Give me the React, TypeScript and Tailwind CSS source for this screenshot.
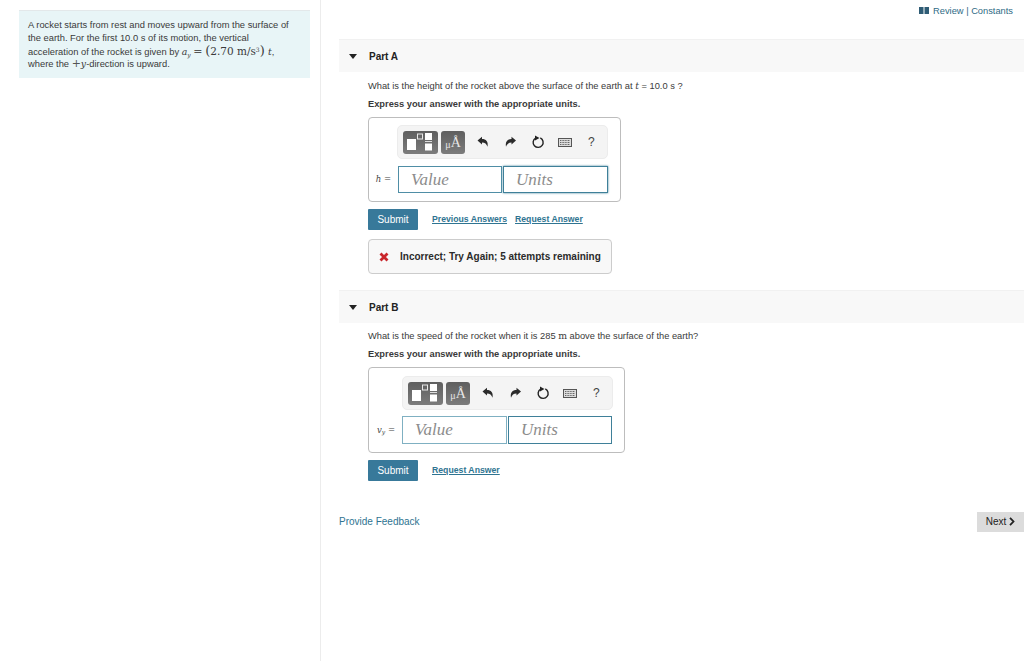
import React from "react";

const sans = "font-['Liberation_Sans',Arial,sans-serif]";
const serif = "font-['Liberation_Serif','Times_New_Roman',serif]";
const math = "font-['DejaVu_Serif',serif]";

function Toolbar({ ml, mt }: { ml: string; mt: string }) {
  return (
    <div className={`${ml} ${mt} flex h-[34px] w-[211px] items-center rounded-[5px] border border-[#ececec] bg-[#f4f4f4] pl-[5px]`}>
      <div className="flex h-[23px] w-[35px] items-center justify-center rounded-[3px] bg-linear-to-b from-[#5f5f5f] to-[#7c7c7c]">
        <svg width="29" height="20" viewBox="0 0 29 20">
          <rect x="1" y="7" width="9" height="11" fill="#fff" />
          <rect x="11.5" y="2" width="5" height="5" fill="none" stroke="#e8e8e8" strokeWidth="1" />
          <rect x="19" y="1" width="7" height="7" fill="#fff" />
          <rect x="19" y="9" width="7" height="1" fill="#ddd" />
          <rect x="19" y="11.5" width="7" height="7" fill="#fff" />
        </svg>
      </div>
      <div className={`ml-[3px] flex h-[23px] w-[24px] items-end justify-center rounded-[3px] bg-linear-to-b from-[#5f5f5f] to-[#7c7c7c] pb-[4px] leading-none text-[#e6e6e6] ${serif}`}>
        <span className="text-[10px] leading-none">μ</span>
        <span className="text-[14px] leading-none">Å</span>
      </div>
      <svg className="ml-[12px]" width="12" height="12" viewBox="0 0 12 12">
        <path d="M0.5 4.5 L5 0.8 V3 C9 3 11.5 5.5 10.5 10.8 C9.5 8 8 6.5 5 6.5 V8.5 Z" fill="#2b2b2b" />
      </svg>
      <svg className="ml-[16px]" width="12" height="12" viewBox="0 0 12 12">
        <path d="M11 4.5 L6.5 0.8 V3 C2.5 3 0 5.5 1 10.8 C2 8 3.5 6.5 6.5 6.5 V8.5 Z" fill="#2b2b2b" />
      </svg>
      <svg className="ml-[15px]" width="13" height="14" viewBox="0 0 13 14">
        <path d="M8.3 2.9 A5 5 0 1 1 3.6 3.1" fill="none" stroke="#222" strokeWidth="1.4" />
        <path d="M3 0.5 L7.5 3 L3 5.5 Z" fill="#222" />
      </svg>
      <svg className="ml-[13px]" width="14" height="9" viewBox="0 0 14 9">
        <rect x="0.5" y="0.5" width="13" height="8" fill="#ddd" stroke="#555" />
        <path d="M2 2.5 H12 M2 4.5 H12 M2 6.5 H12" stroke="#666" strokeWidth="1" strokeDasharray="1 0.6" />
      </svg>
      <span className={`ml-[16px] text-[12px] text-[#444] ${sans}`}>?</span>
    </div>
  );
}

function AnswerBox({ label, a }: { label: React.ReactNode; a: boolean }) {
  return (
    <div className={`${a ? "h-[85px] w-[253px]" : "h-[86px] w-[257px]"} rounded-[4px] border border-[#bdbdbd]`}>
      <Toolbar ml={a ? "ml-[28px]" : "ml-[33px]"} mt={a ? "mt-[7px]" : "mt-[8px]"} />
      <div className={`${a ? "mt-[7px]" : "mt-[6px]"} flex items-center`}>
        <div className={`${a ? "w-[29px]" : "w-[33px]"} flex justify-end pr-[7px] text-[8.5px] text-[#444]`}>{label}</div>
        <div className={`flex items-center border ${a ? "h-[27px] w-[104px] border-[#4f8ea6]" : "h-[28px] w-[105px] border-[#7fb0c2]"} pl-3 text-[17px] italic text-[#8c8c8c] ${serif}`}>Value</div>
        <div className={`ml-px flex ${a ? "h-[27px] w-[105px] shadow-[0_0_2px_#3f8099]" : "h-[28px] w-[104px]"} items-center border border-[#3f8099] pl-3 text-[17px] italic text-[#8c8c8c] ${serif}`}>Units</div>
      </div>
    </div>
  );
}

function PartHeader({ title }: { title: string }) {
  return (
    <div className="flex h-[33px] items-center border-t border-[#f1f1f1] bg-[#f8f8f8]">
      <svg className="ml-[10px]" width="8" height="5" viewBox="0 0 8 5">
        <path d="M0 0 H8 L4 5 Z" fill="#222" />
      </svg>
      <span className="ml-[12px] text-[10px] font-bold text-[#222]">{title}</span>
    </div>
  );
}

const linkCls = "text-[8.7px] font-bold text-[#2f7491] underline";

function Submit() {
  return (
    <div className="flex h-[21px] w-[50px] items-center justify-center rounded-[1px] bg-[#38799a] text-[10px] text-white">Submit</div>
  );
}

export default function App() {
  return (
    <div className={`flex h-[661px] w-[1024px] overflow-hidden bg-white ${sans}`}>
      <div className="h-full w-[321px] shrink-0 border-r border-[#ececec] pl-[19px] pr-[10px] pt-[10px]">
        <div className="h-[68px] border-t border-[#e3e8ea] bg-[#e8f5f7] pl-[9px] pt-[9px] text-[9.35px] leading-[11.5px] text-[#3a3a3a]">
          <div className="whitespace-nowrap">A rocket starts from rest and moves upward from the surface of</div>
          <div className="whitespace-nowrap">the earth. For the first 10.0 <span className={math}>s</span> of its motion, the vertical</div>
          <div className="relative top-px whitespace-nowrap">
            acceleration of the rocket is given by <span className={`${math} italic`}>a<sub className="text-[6px]">y</sub></span>{" "}
            <span className={`${math} text-[11px] text-[#555]`}>=</span>{" "}
            <span className={`${math} text-[10.5px]`}><span className="text-[13px]">(</span>2.70 m/s<sup className="text-[6px]">3</sup><span className="text-[13px]">)</span> </span>
            <span className={`${math} italic`}>t</span>,
          </div>
          <div className="whitespace-nowrap">where the <span className={`${math} text-[11px] text-[#555]`}>+</span><span className={`${math} italic`}>y</span>-direction is upward.</div>
        </div>
      </div>
      <div className="min-w-0 flex-1 pl-[18px]">
        <div className="flex h-[39px] items-start justify-end pr-[11px] pt-[5px] text-[9.3px] text-[#2f6a85]">
          <svg className="mr-[4px] mt-[2px]" width="10" height="7" viewBox="0 0 10 7">
            <rect width="4.5" height="7" fill="#2f5c75" />
            <rect x="5.5" width="4.5" height="7" fill="#2f5c75" />
          </svg>
          <span>Review | Constants</span>
        </div>
        <PartHeader title="Part A" />
        <div className="pl-[29px]">
          <p className="mt-[8px] text-[9.3px] leading-[12px] text-[#3a3a3a]">
            What is the height of the rocket above the surface of the earth at <span className={`${math} italic`}>t</span> = 10.0 <span className={math}>s</span> ?
          </p>
          <p className="mt-[6px] text-[9.3px] font-bold leading-[12px] text-[#3a3a3a]">Express your answer with the appropriate units.</p>
          <div className="mt-[7px]">
            <AnswerBox a label={<span className={`${math} italic`}>h <span className="not-italic">=</span></span>} />
          </div>
          <div className="mt-[7px] flex items-center">
            <Submit />
            <span className={`ml-[14px] ${linkCls}`}>Previous Answers</span>
            <span className={`ml-[8px] ${linkCls}`}>Request Answer</span>
          </div>
          <div className="mt-[9px] flex h-[35px] w-[244px] items-center rounded-[4px] border border-[#cccccc] bg-[#f8f8f8] pl-[10px] text-[10px] font-bold text-[#2b2b2b]">
            <svg width="10" height="10" viewBox="0 0 10 10">
              <path d="M1.5 1.5 L8.5 8.5 M8.5 1.5 L1.5 8.5" stroke="#c9252b" strokeWidth="2.8" />
            </svg>
            <span className="ml-[11px] whitespace-nowrap">Incorrect; Try Again; 5 attempts remaining</span>
          </div>
        </div>
        <div className="mt-[16px]">
          <PartHeader title="Part B" />
        </div>
        <div className="pl-[29px]">
          <p className="mt-[7px] text-[9.3px] leading-[12px] text-[#3a3a3a]">
            What is the speed of the rocket when it is 285 <span className={math}>m</span> above the surface of the earth?
          </p>
          <p className="mt-[6px] text-[9.3px] font-bold leading-[12px] text-[#3a3a3a]">Express your answer with the appropriate units.</p>
          <div className="mt-[7px]">
            <AnswerBox a={false} label={<span className={`${math} italic`}>v<sub className="text-[6px]">y</sub> <span className="not-italic">=</span></span>} />
          </div>
          <div className="mt-[7px] flex items-center">
            <Submit />
            <span className={`ml-[14px] ${linkCls}`}>Request Answer</span>
          </div>
        </div>
        <div className="mt-[31px] flex h-[20px] items-center justify-between">
          <span className="pb-[2px] text-[10px] text-[#2f7491]">Provide Feedback</span>
          <div className="flex h-[20px] w-[47px] items-center justify-center bg-[#dcdcdc] pb-[2px] text-[10px] text-[#222]">
            Next
            <svg className="ml-[3px]" width="6" height="9" viewBox="0 0 6 9">
              <path d="M1 0.8 L4.5 4.5 L1 8.2" fill="none" stroke="#222" strokeWidth="1.8" />
            </svg>
          </div>
        </div>
      </div>
    </div>
  );
}
